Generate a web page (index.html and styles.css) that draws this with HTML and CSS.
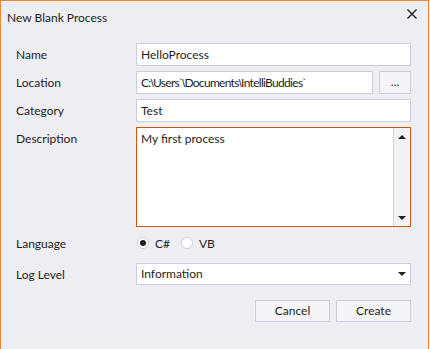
FILE: index.html
```html
<!DOCTYPE html>
<html>
<head>
<meta charset="utf-8">
<link rel="stylesheet" href="styles.css">
</head>
<body>
<div class="window">
  <div class="titlebar">
    <span class="title">New Blank Process</span>
    <span class="close">
      <svg width="10" height="10" viewBox="0 0 10 10"><path d="M0.5 0.5L9.5 9.5M9.5 0.5L0.5 9.5" stroke="#1e1e1e" stroke-width="1.4" fill="none"/></svg>
    </span>
  </div>
  <div class="form">
    <div class="row">
      <div class="label">Name</div>
      <div class="field input">HelloProcess</div>
    </div>
    <div class="row">
      <div class="label">Location</div>
      <div class="field split">
        <div class="input grow path">C:<span class="sym">\</span>Users<span class="sym">`</span><span class="sym">\</span>Documents<span class="sym">\</span>IntelliBuddies<span class="sym">`</span></div>
        <div class="browse">...</div>
      </div>
    </div>
    <div class="row">
      <div class="label">Category</div>
      <div class="field input">Test</div>
    </div>
    <div class="row top">
      <div class="label desc-label">Description</div>
      <div class="field textarea">
        <div class="text">My first process</div>
        <div class="scrollbar">
          <span class="arrow up"></span>
          <span class="arrow down"></span>
        </div>
      </div>
    </div>
    <div class="row lang">
      <div class="label">Language</div>
      <div class="field radios">
        <span class="radio checked"></span><span class="rlabel">C#</span>
        <span class="radio"></span><span class="rlabel">VB</span>
      </div>
    </div>
    <div class="row">
      <div class="label">Log Level</div>
      <div class="field input select">
        <span>Information</span>
        <span class="caret"></span>
      </div>
    </div>
    <div class="actions">
      <div class="btn">Cancel</div>
      <div class="btn">Create</div>
    </div>
  </div>
</div>
</body>
</html>
```
FILE: styles.css
```css
html, body {
  margin: 0;
  padding: 0;
  background: #eeeef2;
  overflow: hidden;
  height: 349px;
}
body {
  font-family: "Lato", "Liberation Sans", sans-serif;
  font-size: 12px;
  color: #1e1e1e;
}
.window {
  box-sizing: border-box;
  width: 429px;
  height: 349px;
  border: 1px solid #f0883c;
  border-bottom: none;
  background: #eeeef2;
  overflow: hidden;
}
.titlebar {
  height: 42px;
  display: flex;
  align-items: flex-start;
  justify-content: space-between;
}
.title {
  padding-left: 6px;
  padding-top: 9px;
  line-height: 16px;
  font-size: 12px;
}
.close {
  display: block;
  margin-top: 8px;
  margin-right: 11px;
  width: 10px;
  height: 10px;
}
.close svg { display: block; }
.form {
  padding-left: 15px;
  width: 395px;
}
.row {
  display: flex;
  align-items: center;
  margin-bottom: 5px;
}
.row.top { align-items: flex-start; }
.label {
  width: 120px;
  flex: none;
}
.desc-label { padding-top: 4px; }
.field {
  width: 275px;
  box-sizing: border-box;
}
.input {
  height: 23px;
  box-sizing: border-box;
  border: 1px solid #cccedb;
  background: #ffffff;
  padding: 0 4px;
  line-height: 21px;
  white-space: nowrap;
  overflow: hidden;
}
.path {
  letter-spacing: -0.7px;
}
.path .sym {
  font-family: "Liberation Sans", sans-serif;
  font-size: 11px;
}
.split {
  display: flex;
  gap: 6px;
}
.grow {
  flex: 1;
}
.browse {
  width: 32px;
  height: 23px;
  box-sizing: border-box;
  border: 1px solid #cccedb;
  background: #f5f5f7;
  text-align: center;
  line-height: 19px;
}
.textarea {
  height: 100px;
  border: 1px solid #c8590b;
  background: #ffffff;
  display: flex;
}
.textarea .text {
  flex: 1;
  padding: 3px 4px;
  line-height: 16px;
}
.scrollbar {
  width: 16px;
  flex: none;
  border-left: 1px solid #d5d5de;
  background: #f3f3f6;
  display: flex;
  flex-direction: column;
  justify-content: space-between;
  align-items: center;
  padding: 7px 0 6px;
}
.arrow {
  width: 0;
  height: 0;
  border-left: 4px solid transparent;
  border-right: 4px solid transparent;
}
.arrow.up { border-bottom: 4px solid #1e1e1e; }
.arrow.down { border-top: 4px solid #1e1e1e; }
.row.lang {
  height: 22px;
  margin-bottom: 9px;
}
.radios {
  display: flex;
  align-items: center;
  padding-left: 1px;
}
.radio {
  width: 12px;
  height: 12px;
  box-sizing: border-box;
  border: 1px solid #cccedb;
  border-radius: 50%;
  background: #ffffff;
  display: flex;
  align-items: center;
  justify-content: center;
}
.radio.checked::after {
  content: "";
  width: 6px;
  height: 6px;
  border-radius: 50%;
  background: #1e1e1e;
}
.rlabel {
  margin-left: 6px;
  margin-right: 11px;
}
.select {
  height: 22px;
  line-height: 20px;
  display: flex;
  justify-content: space-between;
  align-items: center;
  padding-right: 4px;
}
.caret {
  width: 0;
  height: 0;
  border-left: 4px solid transparent;
  border-right: 4px solid transparent;
  border-top: 4px solid #1e1e1e;
}
.actions {
  display: flex;
  justify-content: flex-end;
  gap: 6px;
  width: 395px;
  margin-top: 15px;
}
.btn {
  width: 75px;
  height: 22px;
  box-sizing: border-box;
  border: 1px solid #cccedb;
  background: #f5f5f7;
  text-align: center;
  line-height: 20px;
}
```
